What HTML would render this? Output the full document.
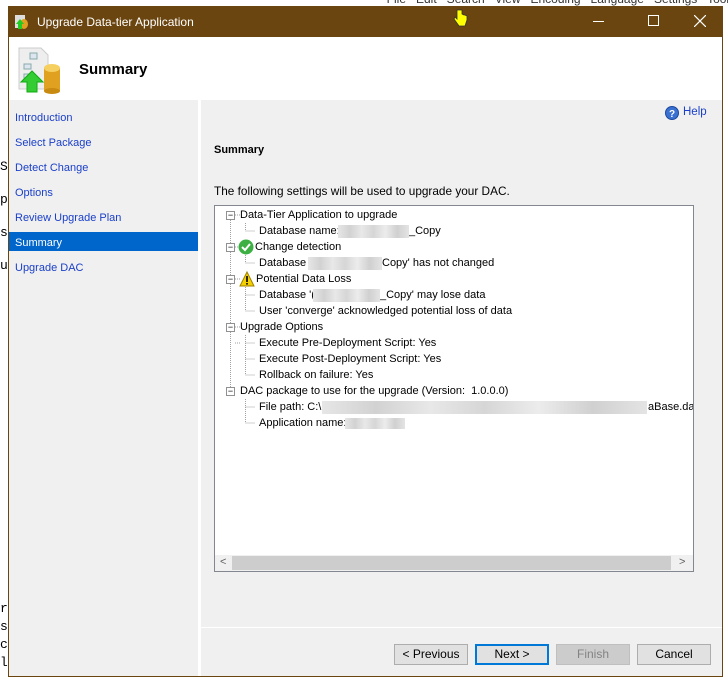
<!DOCTYPE html>
<html><head><meta charset="utf-8"><style>
*{margin:0;padding:0;box-sizing:border-box}
body{width:728px;height:681px;overflow:hidden;background:#fff;font-family:"Liberation Sans",Arial,sans-serif;font-size:12px;position:relative;color:#000}
.abs{position:absolute}
.win{left:8px;top:6px;width:715px;height:671px;border:1px solid #6b4510;border-top:none;background:#f0f0f0}
.title{left:8px;top:6px;width:715px;height:31px;background:#6b4510;color:#fff;font-size:12px}
.nav a{position:absolute;left:15px;color:#1a3fc9;text-decoration:none;font-size:11px;margin-top:2px}
.tree div{position:absolute;white-space:nowrap;font-size:11px;margin-top:1px}
.blur{position:absolute;height:13px;background:linear-gradient(90deg,#e6e6e6,#d2d2d2,#e8e8e8,#d6d6d6,#ececec,#d0d0d0,#e4e4e4)}
.btn{position:absolute;top:644px;height:21px;width:74px;border:1px solid #adadad;background:#e1e1e1;text-align:center;line-height:19px;font-size:12px}
.pm{position:absolute;width:9px;height:9px;border:1px solid #919191;background:#fff;font-size:9px;line-height:6px;text-align:center;color:#000}
</style></head><body>
<div class="abs" style="left:380px;top:-8px;width:348px;height:14px;background:#fff;font-size:12px;color:#333;overflow:hidden;white-space:nowrap">&nbsp; File &nbsp; Edit &nbsp; Search &nbsp; View &nbsp; Encoding &nbsp; Language &nbsp; Settings &nbsp; Tools &nbsp; Macro &nbsp; Run &nbsp; Plugins &nbsp; Window</div>
<div class="abs" style="left:0;top:150px;font-family:'Liberation Mono';font-size:13px;line-height:33px">S<br>p<br>s<br>u</div>
<div class="abs" style="left:0;top:600px;font-family:'Liberation Mono';font-size:13px;line-height:18px">r<br>s<br>c<br>l</div>

<div class="abs win"></div>
<div class="abs title">
 <svg class="abs" style="left:5px;top:8px" width="16" height="16"><rect x="2" y="1" width="10" height="13" fill="#ddd"/><ellipse cx="11" cy="10" rx="4" ry="5" fill="#e0a020"/><path d="M5 15V10H3L7 5L11 10H9V15Z" fill="#2c2"/></svg>
 <span class="abs" style="left:29px;top:9px">Upgrade Data-tier Application</span>
 <div class="abs" style="left:585px;top:15px;width:11px;height:1px;background:#fff"></div>
 <div class="abs" style="left:640px;top:9px;width:11px;height:11px;border:1px solid #fff"></div>
 <svg class="abs" style="left:686px;top:9px" width="12" height="12"><path d="M0 0L12 12M12 0L0 12" stroke="#fff" stroke-width="1.2"/></svg>
</div>
<svg class="abs" style="left:452px;top:8px" width="16" height="20"><path d="M5 2v9l-2-2-1 2 5 7h6l2-6v-4l-2-1-1 0-2-1V2z" fill="#ff0" stroke="#333" stroke-width=".8"/></svg>
<div class="abs" style="left:9px;top:37px;width:713px;height:63px;background:#fff"></div>
<svg class="abs" style="left:16px;top:44px" width="48" height="50">
 <path d="M3 4h22l7 7v34H3z" fill="#eee" stroke="#ccc"/>
 <rect x="14" y="9" width="7" height="6" fill="#dde6f0" stroke="#8aa"/><rect x="8" y="20" width="7" height="5" fill="#dde6f0" stroke="#8aa"/><rect x="8" y="30" width="7" height="5" fill="#dde6f0" stroke="#8aa"/>
 <rect x="28" y="24" width="16" height="23" fill="#e0a020"/><ellipse cx="36" cy="24" rx="8" ry="4" fill="#f5d060"/><ellipse cx="36" cy="47" rx="8" ry="3" fill="#c88a10"/>
 <path d="M11 48V38H5L16 27L27 38H21V48Z" fill="#3c3" stroke="#1a1" />
</svg>
<div class="abs" style="left:79px;top:61px;font-size:15px;font-weight:bold">Summary</div>
<div class="abs" style="left:198px;top:100px;width:3px;height:576px;background:#fff"></div>
<div class="abs" style="left:9px;top:232px;width:189px;height:19px;background:#0066cc"></div>
<div class="nav">
<a style="top:110px">Introduction</a><a style="top:135px">Select Package</a><a style="top:160px">Detect Change</a><a style="top:185px">Options</a><a style="top:210px">Review Upgrade Plan</a><a style="top:235px;color:#fff">Summary</a><a style="top:260px">Upgrade DAC</a>
</div>
<svg class="abs" style="left:665px;top:106px" width="14" height="14"><circle cx="7" cy="7" r="6.5" fill="#3a70d0" stroke="#1a48a0"/><text x="7" y="11" font-size="10" font-weight="bold" fill="#fff" text-anchor="middle" font-family="Liberation Sans">?</text></svg>
<div class="abs" style="left:683px;top:106px;color:#1a3fc9;font-size:11.5px">Help</div>
<div class="abs" style="left:214px;top:144px;font-weight:bold;font-size:11px">Summary</div>
<div class="abs" style="left:214px;top:184px;font-size:11.8px">The following settings will be used to upgrade your DAC.</div>
<div class="abs" style="left:214px;top:205px;width:480px;height:367px;border:1px solid #828790;background:#fff;overflow:hidden">
 <svg class="abs" style="left:0;top:0" width="480" height="350">
  <g stroke="#a0a0a0" stroke-dasharray="1,1" fill="none">
   <path d="M15.5 14V182"/><path d="M20 9h5M20 137h5M20 121h5M20 73h5M20 41h5"/>
   <path d="M30.5 17V25h10"/><path d="M30.5 49V57h10"/><path d="M30.5 81V105h10M30.5 89h10"/><path d="M30.5 129V169h10M30.5 137h10M30.5 153h10"/><path d="M30.5 193V217h10M30.5 201h10"/>
  </g>
 </svg>
 <div class="pm" style="left:11px;top:5px">−</div><div class="pm" style="left:11px;top:37px">−</div><div class="pm" style="left:11px;top:69px">−</div><div class="pm" style="left:11px;top:117px">−</div><div class="pm" style="left:11px;top:181px">−</div>
 <svg class="abs" style="left:23px;top:33px" width="16" height="16"><circle cx="8" cy="8" r="7.5" fill="#3cb043"/><path d="M4 8l3 3 5-6" stroke="#fff" stroke-width="2" fill="none"/></svg>
 <svg class="abs" style="left:24px;top:65px" width="16" height="16"><path d="M8 1L15 15H1Z" fill="#f5d000" stroke="#a08000"/><rect x="7.2" y="5" width="1.6" height="6" fill="#000"/><rect x="7.2" y="12" width="1.6" height="1.6" fill="#000"/></svg>
 <div class="tree">
  <div style="left:25px;top:2px">Data-Tier Application to upgrade</div>
  <div style="left:44px;top:18px">Database name:</div><div style="left:194px;top:18px">_Copy</div>
  <div style="left:40px;top:34px">Change detection</div>
  <div style="left:44px;top:50px">Database</div><div style="left:167px;top:50px">Copy' has not changed</div>
  <div style="left:41px;top:66px">Potential Data Loss</div>
  <div style="left:44px;top:82px">Database '(</div><div style="left:165px;top:82px">_Copy' may lose data</div>
  <div style="left:44px;top:98px">User 'converge' acknowledged potential loss of data</div>
  <div style="left:25px;top:114px">Upgrade Options</div>
  <div style="left:44px;top:130px">Execute Pre-Deployment Script: Yes</div>
  <div style="left:44px;top:146px">Execute Post-Deployment Script: Yes</div>
  <div style="left:44px;top:162px">Rollback on failure: Yes</div>
  <div style="left:25px;top:178px">DAC package to use for the upgrade (Version:&nbsp; 1.0.0.0)</div>
  <div style="left:44px;top:194px">File path: C:\</div><div style="left:433px;top:194px">aBase.dac</div>
  <div style="left:44px;top:210px">Application name:</div>
 </div>
 <div class="blur" style="left:123px;top:19px;width:71px"></div>
 <div class="blur" style="left:93px;top:51px;width:74px"></div>
 <div class="blur" style="left:98px;top:83px;width:67px"></div>
 <div class="blur" style="left:107px;top:195px;width:325px"></div>
 <div class="blur" style="left:130px;top:212px;width:60px;height:11px"></div>
 <div class="abs" style="left:0;top:349px;width:478px;height:16px;background:#f0f0f0"></div>
 <div class="abs" style="left:17px;top:350px;width:439px;height:14px;background:#cdcdcd"></div>
 <div class="abs" style="left:5px;top:350px;color:#606060;font-size:11px">&lt;</div>
 <div class="abs" style="left:464px;top:350px;color:#606060;font-size:11px">&gt;</div>
</div>
<div class="abs" style="left:201px;top:627px;width:521px;height:1px;background:#fff"></div>
<div class="btn" style="left:394px">&lt; Previous</div>
<div class="btn" style="left:475px;border:2px solid #0078d7;line-height:17px">Next &gt;</div>
<div class="btn" style="left:556px;background:#ccc;border-color:#bfbfbf;color:#838383">Finish</div>
<div class="btn" style="left:637px">Cancel</div>
</body></html>
